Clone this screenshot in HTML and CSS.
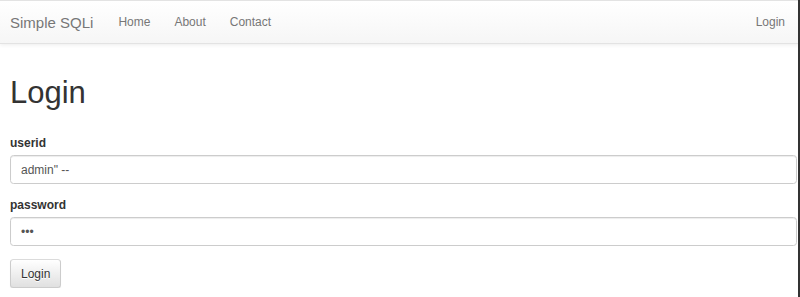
FILE: index.html
```html
<!DOCTYPE html>
<html lang="en">
<head>
    <meta charset="UTF-8">
    <title>Simple SQLi - Login</title>
    <link rel="stylesheet" href="styles.css">
</head>
<body>
    <nav class="navbar">
        <a class="brand" href="#">Simple SQLi</a>
        <ul class="nav">
            <li><a href="#">Home</a></li>
            <li><a href="#">About</a></li>
            <li><a href="#">Contact</a></li>
        </ul>
        <ul class="nav nav-right">
            <li><a href="#">Login</a></li>
        </ul>
    </nav>

    <div class="container">
        <h1>Login</h1>
        <form id="loginForm">
            <div class="form-group">
                <label for="userid">userid</label>
                <input type="text" id="userid" name="userid" value='admin" --'>
            </div>
            <div class="form-group">
                <label for="password">password</label>
                <input type="password" id="password" name="password" value="abc">
            </div>
            <button type="submit" class="btn">Login</button>
        </form>
    </div>
    <div class="edge"></div>
</body>
</html>
```

FILE: styles.css
```css
html, body {
    margin: 0;
    padding: 0;
}
body {
    font-family: "Liberation Sans", Arial, sans-serif;
    font-size: 12px;
    line-height: 1.43;
    color: #333;
    background-color: #fff;
}
a {
    text-decoration: none;
}
.navbar {
    display: flex;
    align-items: center;
    height: 42px;
    border-top: 1px solid #e3e3e3;
    border-bottom: 1px solid #e3e3e3;
    background-image: linear-gradient(to bottom, #fff 0, #f6f6f6 100%);
    box-shadow: 0 1px 4px rgba(0,0,0,0.075);
    padding: 2px 3px 0 10px;
    box-sizing: border-box;
    height: 44px;
}
.brand {
    font-size: 15px;
    color: #777;
    padding-right: 13px;
}
.nav {
    display: flex;
    list-style: none;
    margin: 0;
    padding: 0;
}
.nav a {
    display: block;
    padding: 0 12px;
    color: #777;
    font-size: 12px;
}
.nav-right {
    margin-left: auto;
}
.container {
    padding: 0 3px 0 10px;
}
h1 {
    font-size: 31px;
    font-weight: 500;
    line-height: 34px;
    margin: 32px 0 25px;
}
.form-group {
    margin-bottom: 13px;
}
.form-group label {
    display: block;
    font-weight: bold;
    line-height: 16px;
    margin-bottom: 4px;
}
.form-group input {
    display: block;
    width: 100%;
    height: 29px;
    box-sizing: border-box;
    padding: 5px 10px;
    font-family: inherit;
    font-size: 12px;
    color: #555;
    border: 1px solid #ccc;
    border-radius: 3.5px;
    box-shadow: inset 0 1px 1px rgba(0,0,0,0.075);
}
.btn {
    height: 29px;
    padding: 4px 10px;
    font-family: inherit;
    font-size: 12px;
    color: #333;
    border: 1px solid #ccc;
    border-top-color: #dbdbdb;
    border-radius: 3.5px;
    background-image: linear-gradient(to bottom, #fff 0, #e0e0e0 100%);
    text-shadow: 0 1px 0 #fff;
    box-shadow: 0 1px 1px rgba(0,0,0,0.075);
}
.edge {
    position: fixed;
    top: 0;
    right: 0;
    width: 2px;
    height: 100%;
    background-color: #333;
}
```
